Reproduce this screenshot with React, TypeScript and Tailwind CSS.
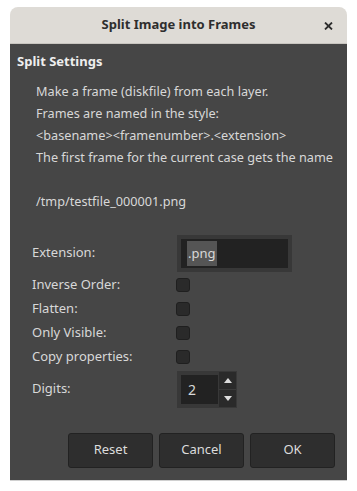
import React, { useState } from 'react';

const font = { fontFamily: '"Noto Sans", "Open Sans", sans-serif' };

const Checkbox = () => {
  const [checked, setChecked] = useState(false);
  return (
    <button
      onClick={() => setChecked(!checked)}
      className="w-[14px] h-[14px] rounded-[3px] bg-[#2a2a2a] border border-[#1f1f1f] flex items-center justify-center"
    >
      {checked && <span className="text-[10px] leading-none text-[#ddd]">✓</span>}
    </button>
  );
};

const App = () => {
  const [digits, setDigits] = useState(2);
  const [ext] = useState('.png');
  const rows = ['Inverse Order:', 'Flatten:', 'Only Visible:', 'Copy properties:'];

  return (
    <div className="w-[357px] h-[491px] bg-white pt-[7px] pl-[10px]" style={font}>
      <div className="w-[337px] h-[474px] flex flex-col rounded-t-[8px] overflow-hidden border-b border-[#d0d0d0]">
        <div className="h-[37px] bg-[#dedbd6] flex items-center relative border-b border-[#c8c5c0]">
          <div className="flex-1 text-center text-[13px] font-bold text-[#2e2e2e]">Split Image into Frames</div>
          <svg className="absolute right-[14px] top-[15px]" width="9" height="8" viewBox="0 0 9 8">
            <path d="M1 0.5 L8 7.5 M8 0.5 L1 7.5" stroke="#2e2e2e" strokeWidth="1.8" />
          </svg>
        </div>
        <div className="flex-1 bg-[#464646] text-[#dcdcdc] flex flex-col">
          <div className="pl-[7px] pt-[8px] text-[13px] font-bold text-[#eeeeee]">Split Settings</div>
          <div className="pl-[26px] pt-[8px] text-[12.7px] leading-[22px] text-[#d8d8d8]">
            <div>Make a frame (diskfile) from each layer.</div>
            <div>Frames are named in the style:</div>
            <div>&lt;basename&gt;&lt;framenumber&gt;.&lt;extension&gt;</div>
            <div>The first frame for the current case gets the name</div>
            <div>&nbsp;</div>
            <div>/tmp/testfile_000001.png</div>
          </div>
          <div className="pl-[22px] pt-[23px] flex flex-col text-[13px] text-[#d8d8d8]">
            <div className="flex items-center h-[37px]">
              <span className="w-[145px]">Extension:</span>
              <div className="w-[115px] h-[37px] bg-[#383838] p-[4px]">
                <div className="h-full bg-[#222] flex items-center pl-[6px]">
                  <span className="bg-[#555] px-[1px] leading-[25px]">{ext}</span>
                </div>
              </div>
            </div>
            <div className="flex flex-col mt-[1px]">
              {rows.map((r) => (
                <div key={r} className="flex items-center h-[24px]">
                  <span className="w-[144px]">{r}</span>
                  <Checkbox />
                </div>
              ))}
            </div>
            <div className="flex items-center h-[37px] mt-[2px]">
              <span className="w-[145px]">Digits:</span>
              <div className="w-[60px] h-[37px] bg-[#383838] p-[4px] pr-[1px] flex">
                <div className="w-[37px] h-full bg-[#222] flex items-center pl-[7px] text-[14px]">{digits}</div>
                <div className="flex flex-col flex-1 ml-[1px] -my-[3px]">
                  <button onClick={() => setDigits(digits + 1)} className="flex-1 bg-[#2a2a2a] border-b border-[#3a3a3a] flex items-center justify-center">
                    <svg width="8" height="5" viewBox="0 0 8 5"><path d="M0 5 L4 0 L8 5 Z" fill="#ddd" /></svg>
                  </button>
                  <button onClick={() => setDigits(Math.max(1, digits - 1))} className="flex-1 bg-[#2a2a2a] flex items-center justify-center">
                    <svg width="8" height="5" viewBox="0 0 8 5"><path d="M0 0 L8 0 L4 5 Z" fill="#ddd" /></svg>
                  </button>
                </div>
              </div>
            </div>
          </div>
          <div className="flex justify-end gap-[6px] pr-[12px] mt-[25px]">
            {['Reset', 'Cancel', 'OK'].map((b) => (
              <button key={b} className="w-[85px] h-[35px] rounded-[3px] bg-[#2e2e2e] border border-[#222] text-[13px] text-[#dcdcdc]">
                {b}
              </button>
            ))}
          </div>
        </div>
      </div>
    </div>
  );
};

export default App;
